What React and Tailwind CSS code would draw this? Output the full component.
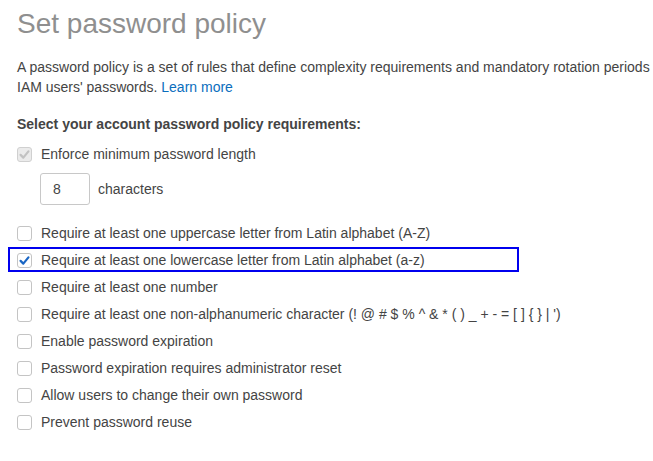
import React from "react";

const Check = ({ color }) => (
  <svg viewBox="0 0 14 14" className="w-[11px] h-[11px]">
    <path d="M2 7.5 L5.5 11 L12 3" fill="none" stroke={color} strokeWidth="2.8" strokeLinecap="round" strokeLinejoin="round" />
  </svg>
);

const Box = ({ checked, disabled }) => (
  <span
    className={
      "w-[15px] h-[15px] rounded-[3px] border flex items-center justify-center shrink-0 " +
      (disabled ? "bg-[#ebebeb] border-[#d0d0d0]" : "bg-white border-[#c4c4c4]")
    }
  >
    {checked && <Check color={disabled ? "#c2c2c2" : "#1a66c4"} />}
  </span>
);

const Row = ({ label, checked, highlight }) => (
  <div className="relative flex items-center gap-[9px] h-[27px]">
    <Box checked={checked} />
    <span>{label}</span>
    {highlight && (
      <span className="absolute left-[-9px] top-[0px] w-[511px] h-[25px] border-2 border-[#0000ee]" />
    )}
  </div>
);

export default function App() {
  const rows = [
    { label: "Require at least one uppercase letter from Latin alphabet (A-Z)" },
    { label: "Require at least one lowercase letter from Latin alphabet (a-z)", checked: true, highlight: true },
    { label: "Require at least one number" },
    { label: "Require at least one non-alphanumeric character (! @ # $ % ^ & * ( ) _ + - = [ ] { } | ')" },
    { label: "Enable password expiration" },
    { label: "Password expiration requires administrator reset" },
    { label: "Allow users to change their own password" },
    { label: "Prevent password reuse" },
  ];

  return (
    <div className="w-[653px] h-[461px] overflow-hidden bg-white pl-[17px] pt-[4px] text-[14px] text-[#444444] font-['Liberation_Sans',Arial,sans-serif]">
      <h1 className="text-[28px] leading-[40px] text-[#8f8f8f] font-normal">Set password policy</h1>
      <p className="mt-[13px] leading-[20px] whitespace-nowrap">
        A password policy is a set of rules that define complexity requirements and mandatory rotation periods
        <br />
        IAM users' passwords. <span className="text-[#0a6ebd]">Learn more</span>
      </p>
      <div className="mt-[17px] font-bold leading-[20px]">Select your account password policy requirements:</div>
      <div className="mt-[10px] flex items-center gap-[9px] h-[20px]">
        <Box checked disabled />
        <span>Enforce minimum password length</span>
      </div>
      <div className="mt-[9px] ml-[23px] flex items-center gap-[8px]">
        <div className="w-[50px] h-[32px] border border-[#c8c8c8] rounded-[3px] flex items-center pl-[12px]">8</div>
        <span>characters</span>
      </div>
      <div className="mt-[15px]">
        {rows.map((r) => (
          <Row key={r.label} {...r} />
        ))}
      </div>
    </div>
  );
}
